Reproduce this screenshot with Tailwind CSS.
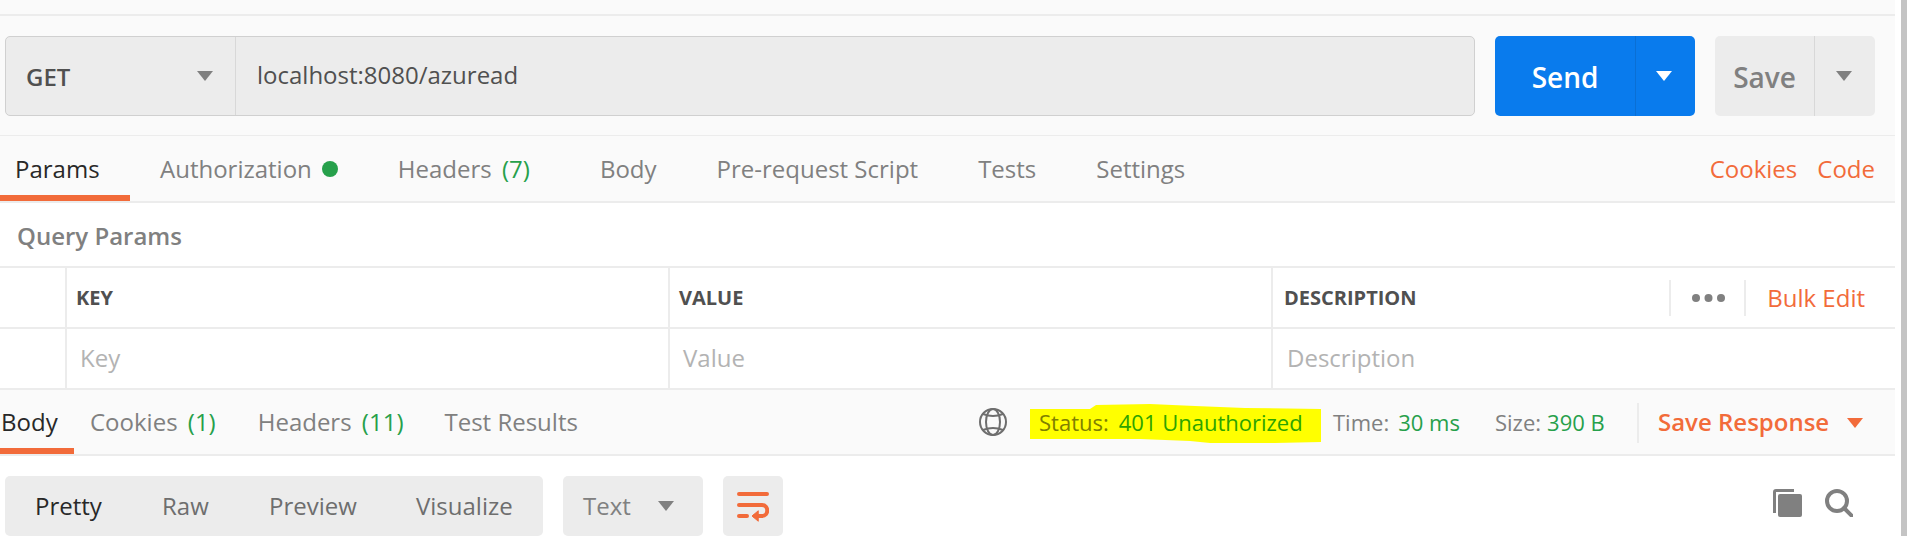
<!DOCTYPE html>
<html lang="en">
<head>
    <meta charset="UTF-8">
    <title>Postman</title>
    <script src="https://cdn.jsdelivr.net/npm/@tailwindcss/browser@4"></script>
</head>
<body class="bg-white overflow-hidden font-['Open_Sans',sans-serif] text-[24px] text-[#808080]">
<div class="flex h-[536px] w-[1907px]">
    <main class="w-[1895px] flex flex-col">
        <div class="h-[16px] bg-[#fafafa] border-b-2 border-[#ececec]"></div>

        <!-- url row -->
        <div class="h-[120px] bg-[#fafafa] border-b border-[#ececec] pl-[5px] flex items-center">
            <div class="w-[1470px] h-[80px] flex bg-[#ececec] border border-[#d0d0d0] rounded-[5px]">
                <div class="w-[230px] border-r border-[#d8d8d8] pl-[20px] pr-[22px] flex items-center justify-between">
                    <span class="font-semibold text-[#505050] pt-[3px]">GET</span>
                    <svg width="16" height="10" viewBox="0 0 16 10"><path d="M0 0h16L8 10z" fill="#808080"/></svg>
                </div>
                <div class="flex-1 pl-[21px] flex items-center text-[#505050] pb-[1px]">localhost:8080/azuread</div>
            </div>
            <div class="ml-[20px] w-[200px] h-[80px] flex bg-[#097bed] rounded-[5px] text-white font-semibold text-[28px]">
                <div class="w-[140px] flex items-center justify-center pt-[2px]">Send</div>
                <div class="flex-1 border-l border-[#0a6fd4] flex items-center justify-center pr-[4px]">
                    <svg width="16" height="10" viewBox="0 0 16 10"><path d="M0 0h16L8 10z" fill="#fff"/></svg>
                </div>
            </div>
            <div class="ml-[20px] w-[160px] h-[80px] flex bg-[#ececec] rounded-[5px] font-semibold text-[28px]">
                <div class="w-[99px] flex items-center justify-center pt-[2px]">Save</div>
                <div class="flex-1 border-l border-[#d8d8d8] flex items-center justify-center pr-[2px]">
                    <svg width="16" height="10" viewBox="0 0 16 10"><path d="M0 0h16L8 10z" fill="#808080"/></svg>
                </div>
            </div>
        </div>

        <!-- request tabs -->
        <div class="h-[67px] bg-[#fafafa] border-b-2 border-[#ececec] flex relative">
            <div class="w-[130px] pl-[15px] pt-[15px] text-[#282828] border-b-[6px] border-[#f26b3a]">Params</div>
            <div class="ml-[30px] pt-[15px] flex items-start">Authorization<span class="w-[16px] h-[16px] rounded-full bg-[#26a04b] ml-[10px] mt-[10px]"></span></div>
            <div class="ml-[60px] pt-[15px]">Headers <span class="text-[#26a04b] ml-[4px]">(7)</span></div>
            <div class="ml-[70px] pt-[15px]">Body</div>
            <div class="ml-[60px] pt-[15px]">Pre-request Script</div>
            <div class="ml-[60px] pt-[15px]">Tests</div>
            <div class="ml-[60px] pt-[15px]">Settings</div>
            <div class="ml-auto pt-[15px] pr-[20px] flex gap-[20px] text-[#f26b3a]"><span>Cookies</span><span>Code</span></div>
        </div>

        <div class="h-[63px] pl-[17px] pt-[3px] flex items-center font-semibold text-[#808080]">Query Params</div>

        <!-- params table -->
        <div class="h-[63px] border-y-2 border-[#ececec] flex text-[20px] font-bold text-[#505050]">
            <div class="w-[67px] border-r-2 border-[#ececec]"></div>
            <div class="w-[603px] border-r-2 border-[#ececec] pl-[9px] flex items-center">KEY</div>
            <div class="w-[603px] border-r-2 border-[#ececec] pl-[9px] flex items-center">VALUE</div>
            <div class="flex-1 pl-[11px] flex items-center">
                <span>DESCRIPTION</span>
                <div class="ml-auto flex items-center h-[36px]">
                    <div class="h-[36px] border-l-2 border-[#ececec]"></div>
                    <svg class="ml-[21px] mr-[19px]" width="33" height="8" viewBox="0 0 33 8" fill="#808080"><circle cx="4" cy="4" r="4"/><circle cx="16.5" cy="4" r="4"/><circle cx="29" cy="4" r="4"/></svg>
                    <div class="h-[36px] border-l-2 border-[#ececec]"></div>
                    <span class="ml-[21px] mr-[30px] text-[#f26b3a] font-normal text-[24px]">Bulk Edit</span>
                </div>
            </div>
        </div>
        <div class="h-[61px] border-b-2 border-[#ececec] flex text-[#b3b3b3]">
            <div class="w-[67px] border-r-2 border-[#ececec]"></div>
            <div class="w-[603px] border-r-2 border-[#ececec] pl-[13px] flex items-center pb-[1px]">Key</div>
            <div class="w-[603px] border-r-2 border-[#ececec] pl-[13px] flex items-center pb-[1px]">Value</div>
            <div class="flex-1 pl-[14px] flex items-center pb-[1px]">Description</div>
        </div>

        <!-- response tabs -->
        <div class="h-[66px] bg-[#fafafa] border-b-2 border-[#ececec] flex relative">
            <div class="w-[74px] pl-[1px] pt-[14px] text-[#282828] border-b-[6px] border-[#f26b3a]">Body</div>
            <div class="ml-[16px] pt-[14px]">Cookies <span class="text-[#26a04b] ml-[4px]">(1)</span></div>
            <div class="ml-[42px] pt-[14px]">Headers <span class="text-[#26a04b] ml-[4px]">(11)</span></div>
            <div class="ml-[41px] pt-[14px]">Test Results</div>

            <svg class="absolute left-[979px] top-[18px]" width="28" height="28" viewBox="0 0 28 28" fill="none" stroke="#6e6e6e" stroke-width="2"><circle cx="14" cy="14" r="13"/><ellipse cx="14" cy="14" rx="7" ry="13"/><path d="M4 6q10 4 20 0M4 22q10-4 20 0"/></svg>
            <svg class="absolute left-[1030px] top-[14px]" width="291" height="41" viewBox="0 0 291 41"><path d="M0 5L60 5 66 1 120 0 165 2 215 4 291 5V38L245 39 180 39 160 37 110 35 0 35z" fill="#ffff00"/></svg>

            <div class="absolute left-[1039px] top-[16px] flex text-[22px]">
                <span class="text-[#808000]">Status:</span><span class="ml-[10px] text-[#2da400]">401 Unauthorized</span>
            </div>
            <div class="absolute left-[1333px] top-[16px] flex text-[22px]"><span>Time:</span><span class="ml-[9px] text-[#26a04b]">30 ms</span></div>
            <div class="absolute left-[1495px] top-[16px] flex text-[22px]"><span>Size:</span><span class="ml-[6px] text-[#26a04b]">390 B</span></div>
            <div class="absolute left-[1637px] top-[13px] h-[40px] border-l-2 border-[#ececec]"></div>
            <div class="absolute left-[1658px] top-[14px] font-semibold text-[#f26b3a]">Save Response</div>
            <svg class="absolute left-[1847px] top-[28px]" width="16" height="10" viewBox="0 0 16 10"><path d="M0 0h16L8 10z" fill="#f26b3a"/></svg>
        </div>

        <!-- response toolbar -->
        <div class="flex-1 flex relative pl-[5px] pt-[20px]">
            <div class="w-[538px] h-[60px] bg-[#ececec] rounded-[5px] flex items-center relative">
                <span class="absolute left-[30px] text-[#282828]">Pretty</span>
                <span class="absolute left-[157px] text-[#6e6e6e]">Raw</span>
                <span class="absolute left-[264px] text-[#6e6e6e]">Preview</span>
                <span class="absolute left-[411px] text-[#6e6e6e]">Visualize</span>
            </div>
            <div class="ml-[20px] w-[140px] h-[60px] bg-[#ececec] rounded-[5px] flex items-center pl-[20px] pr-[29px] justify-between">
                <span>Text</span>
                <svg width="16" height="10" viewBox="0 0 16 10"><path d="M0 0h16L8 10z" fill="#808080"/></svg>
            </div>
            <div class="ml-[20px] w-[60px] h-[60px] bg-[#ececec] rounded-[5px] flex items-center justify-center">
                <svg width="32" height="32" viewBox="0 0 32 32" fill="none" stroke="#f26b3a" stroke-width="4" stroke-linecap="round"><path d="M2 4h28M2 15h23c7 0 7 11 0 11h-7M2 26h8"/><path d="M21 21l-6 5 6 5z" fill="#f26b3a" stroke-width="1"/></svg>
            </div>
            <svg class="absolute left-[1773px] top-[33px]" width="29" height="28" viewBox="0 0 29 28" fill="#808080"><path d="M0 3a3 3 0 0 1 3-3h18v3H3v21H0z"/><rect x="5" y="5" width="24" height="23" rx="2"/></svg>
            <svg class="absolute left-[1825px] top-[33px]" width="28" height="28" viewBox="0 0 28 28" fill="none" stroke="#808080" stroke-width="4"><circle cx="12" cy="12" r="10"/><path d="M19 19l8 8" stroke-linecap="round"/></svg>
        </div>
    </main>
    <div class="w-[6px] bg-white"></div>
    <div class="w-[6px] bg-[#c4c4c4]"></div>
</div>
</body>
</html>
